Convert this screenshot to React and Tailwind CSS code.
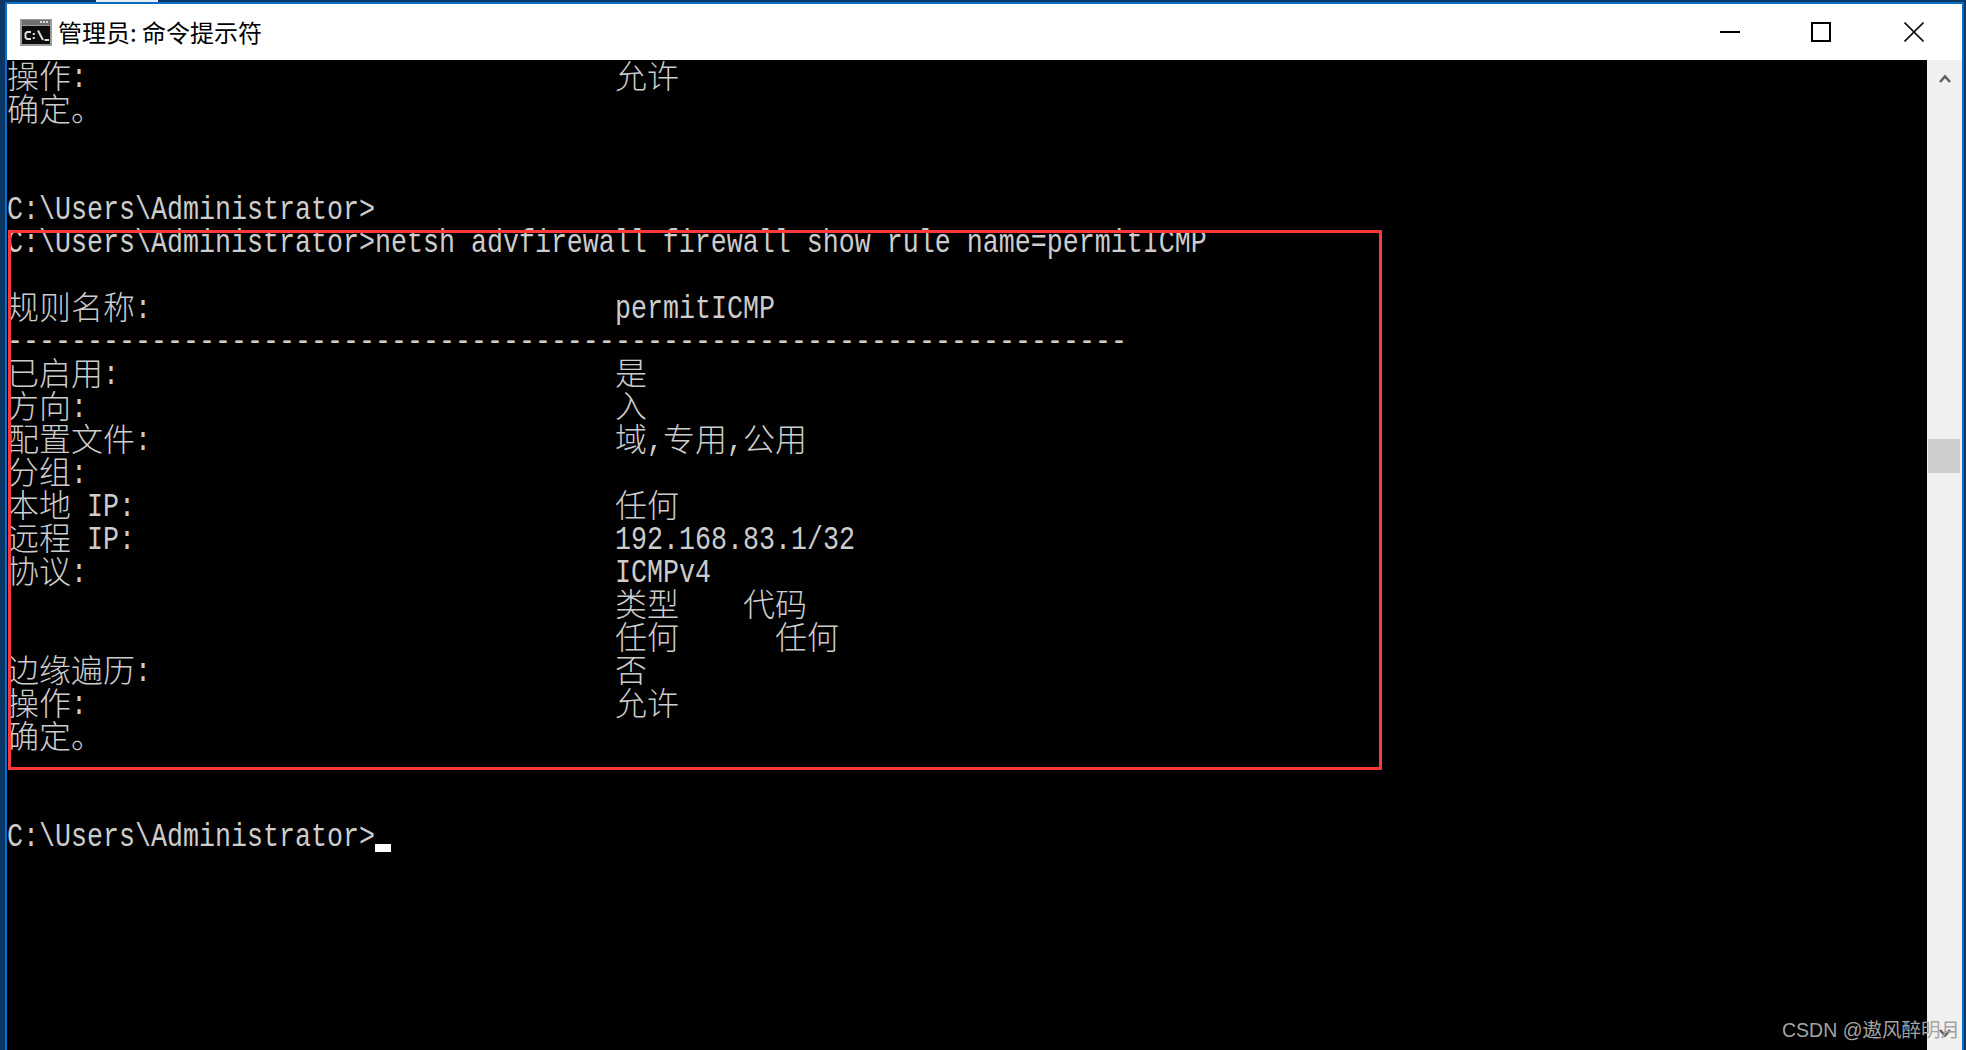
import React from "react";

// splits a console line so latin and CJK get their own cell widths
function Term({ text }) {
  if (!text) return null;
  const parts = text.match(/[\u2E80-\uFFEF]+|[^\u2E80-\uFFEF]+/g);
  return parts.map((part, i) =>
    /[\u2E80-\uFFEF]/.test(part) ? (
      <span key={i} className="inline-block h-[33px] -translate-y-[3px] font-['Noto_Sans_CJK_SC',serif] text-[32px] leading-[33px] font-light">{part}</span>
    ) : (
      <span key={i} className="inline-block h-[26px] scale-y-125 font-['Liberation_Mono',monospace] text-[26.67px] leading-[26px] whitespace-pre">{part}</span>
    )
  );
}

function Line({ left, right }) {
  return (
    <div className="box-border flex h-[33px] items-center pt-[2px] whitespace-pre">
      <div className="flex w-[608px] shrink-0 items-center">
        <Term text={left} />
      </div>
      <div className="flex items-center">
        <Term text={right} />
      </div>
    </div>
  );
}

const lines = [
  ["操作:", "允许"],
  ["确定。", ""],
  ["", ""],
  ["", ""],
];

const rules = [
  ["", ""],
  ["规则名称:", "permitICMP"],
  ["-".repeat(38), "-".repeat(32)],
  ["已启用:", "是"],
  ["方向:", "入"],
  ["配置文件:", "域,专用,公用"],
  ["分组:", ""],
  ["本地 IP:", "任何"],
  ["远程 IP:", "192.168.83.1/32"],
  ["协议:", "ICMPv4"],
  ["", "类型    代码"],
  ["", "任何      任何"],
  ["边缘遍历:", "否"],
  ["操作:", "允许"],
  ["确定。", ""],
];

function CmdIcon() {
  return (
    <svg width="32" height="27" viewBox="0 0 32 27" className="shrink-0">
      <rect width="32" height="27" fill="#9a9a9a" />
      <rect x="2" y="1" width="28" height="5" fill="#707070" />
      <rect x="20" y="2" width="2" height="2" fill="#d8d8d8" />
      <rect x="23" y="2" width="2" height="2" fill="#d8d8d8" />
      <rect x="26" y="2" width="2" height="2" fill="#d8d8d8" />
      <rect x="2" y="7" width="28" height="18" fill="#0c0c0c" />
      <path d="M11 13H7L5.5 14.5V18.5L7 20H11M13.8 14V16M13.8 18V20M18 11.5L23 21M24.5 21H29" fill="none" stroke="#dcdcdc" strokeWidth="2" />
    </svg>
  );
}

export default function App() {
  return (
    <div className="relative flex h-[1050px] w-[1966px] flex-col overflow-hidden bg-[#0a3766] pl-[5px] pr-[2px] pt-[2px]">
      <div className="flex flex-1 flex-col border-x-2 border-t-2 border-[#0b6cc4]">
        {/* title bar */}
        <div className="flex h-[56px] shrink-0 items-center bg-white pl-[13px] text-black">
          <CmdIcon />
          <span className="ml-[6px] font-['Noto_Sans_CJK_SC',sans-serif] text-[24px] leading-none">管理员: 命令提示符</span>
          <div className="ml-auto flex items-center pr-[38px]">
            <span className="h-[2px] w-[20px] bg-black" />
            <span className="ml-[71px] h-[20px] w-[20px] border-2 border-black" />
            <svg width="20" height="20" viewBox="0 0 20 20" className="ml-[73px]">
              <path d="M0.5 0.5L19.5 19.5M19.5 0.5L0.5 19.5" stroke="#111" strokeWidth="1.6" fill="none" />
            </svg>
          </div>
        </div>

        <div className="flex flex-1">
          {/* console output */}
          <div className="flex-1 bg-black text-[#cccccc]">
            {lines.map((l, i) => (
              <Line key={i} left={l[0]} right={l[1]} />
            ))}
            <Line left="C:\Users\Administrator>" />
            <Line left="C:\Users\Administrator>netsh advfirewall firewall show rule name=permitICMP" />
            {rules.map((l, i) => (
              <Line key={i} left={l[0]} right={l[1]} />
            ))}
            <Line />
            <Line />
            <div className="relative box-border flex h-[33px] items-center pt-[2px]">
              <Term text="C:\Users\Administrator>" />
              <span className="absolute left-[368px] top-[25px] h-[8px] w-[16px] bg-white" />
            </div>
          </div>

          {/* scrollbar */}
          <div className="flex w-[35px] shrink-0 flex-col items-center justify-between bg-[#f0f0f0] pt-[14px] pb-[12px]">
            <svg width="12" height="9" viewBox="0 0 12 9">
              <path d="M1 8L6 2.5L11 8" stroke="#606060" strokeWidth="2.6" fill="none" />
            </svg>
            <svg width="12" height="9" viewBox="0 0 12 9">
              <path d="M1 1L6 6.5L11 1" stroke="#606060" strokeWidth="2.6" fill="none" />
            </svg>
          </div>
        </div>
      </div>

      {/* taskbar sliver behind the window */}
      <div className="absolute left-[96px] top-0 h-[2px] w-[62px] bg-[#e8eef4]" />
      {/* scrollbar thumb */}
      <div className="absolute left-[1928px] top-[439px] h-[34px] w-[32px] bg-[#cdcdcd]" />
      {/* red annotation box */}
      <div className="absolute left-[8px] top-[230px] h-[540px] w-[1374px] border-[3px] border-[#ff3838]" />
      {/* watermark */}
      <div className="absolute left-[1782px] top-[1016px] font-['Liberation_Sans','Noto_Sans_CJK_SC',sans-serif] text-[19.5px] leading-[28px] whitespace-pre text-[#a3a3a3]">CSDN @遨风醉明月</div>
    </div>
  );
}
